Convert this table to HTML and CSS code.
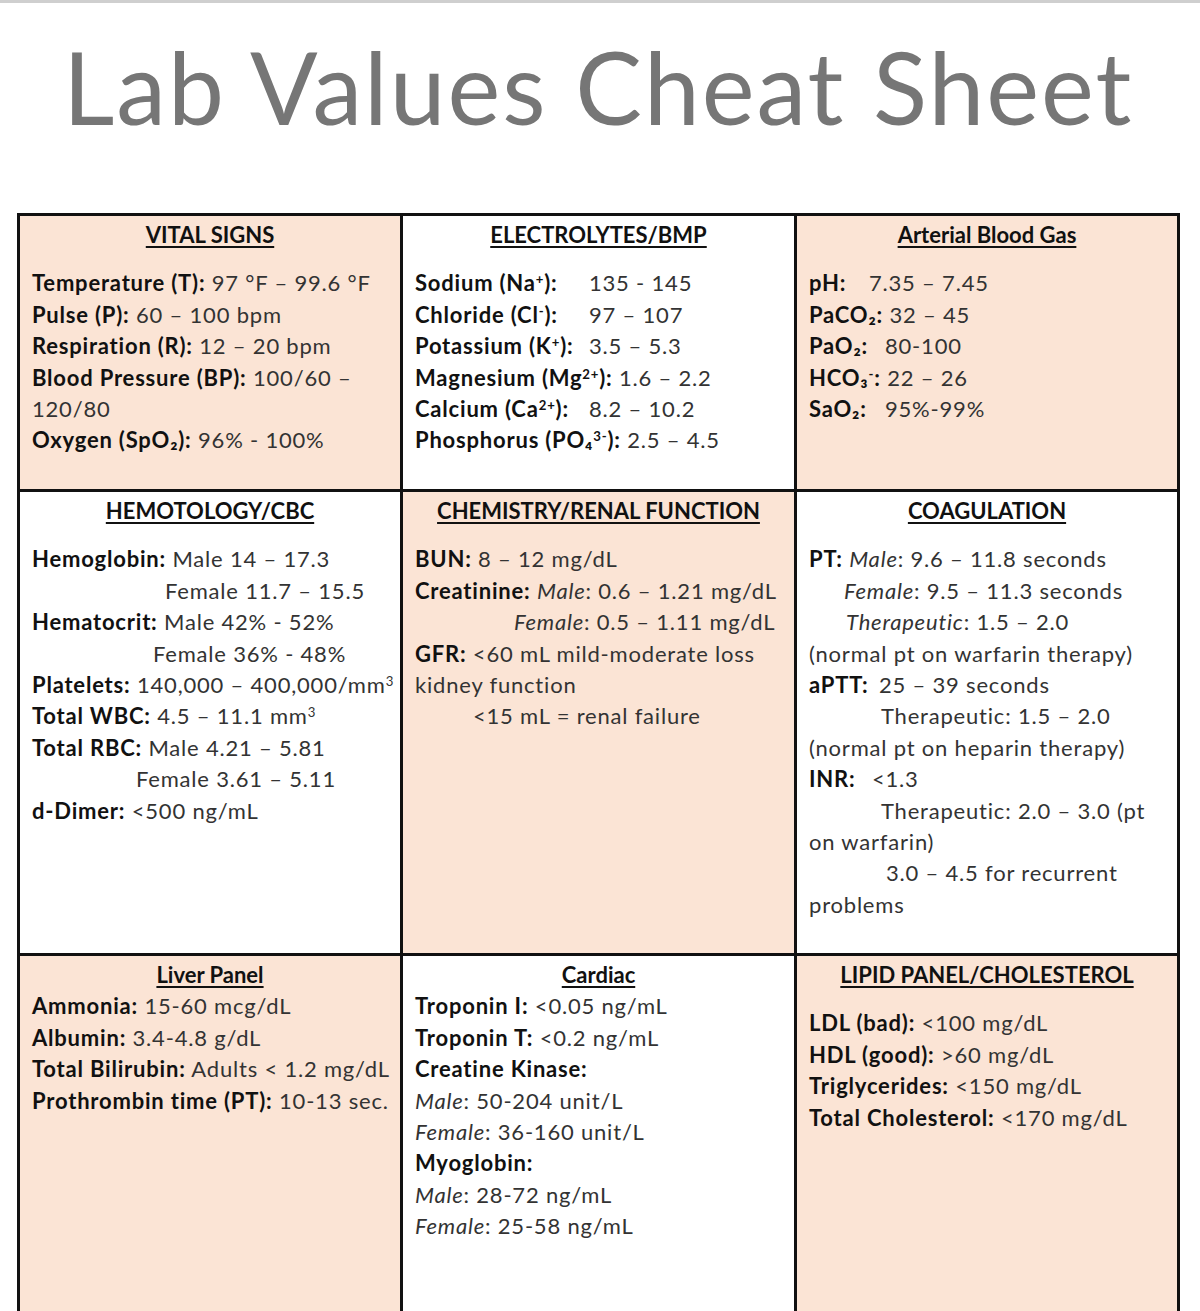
FILE: index.html
```html
<!DOCTYPE html>
<html lang="en">
<head>
<meta charset="utf-8">
<title>Lab Values Cheat Sheet</title>
<link rel="stylesheet" href="styles.css">
</head>
<body>
<div class="topline"></div>
<h1 class="title">Lab Values Cheat Sheet</h1>
<div class="sheet">
  <section class="cell peach">
    <h2 class="head gap">VITAL SIGNS</h2>
    <p><b>Temperature (T):</b> 97 °F – 99.6 °F</p>
    <p><b>Pulse (P):</b> 60 – 100 bpm</p>
    <p><b>Respiration (R):</b> 12 – 20 bpm</p>
    <p><b>Blood Pressure (BP):</b> 100/60 –<br>120/80</p>
    <p><b>Oxygen (SpO₂):</b> 96% - 100%</p>
  </section>
  <section class="cell">
    <h2 class="head gap">ELECTROLYTES/BMP</h2>
    <p><b class="lbl-e">Sodium (Na<sup>+</sup>):</b>135 - 145</p>
    <p><b class="lbl-e">Chloride (Cl<sup>-</sup>):</b>97 – 107</p>
    <p><b class="lbl-e">Potassium (K<sup>+</sup>):</b>3.5 – 5.3</p>
    <p><b>Magnesium (Mg<sup>2+</sup>):</b> 1.6 – 2.2</p>
    <p><b class="lbl-e">Calcium (Ca<sup>2+</sup>):</b>8.2 – 10.2</p>
    <p><b>Phosphorus (PO₄<sup>3-</sup>):</b> 2.5 – 4.5</p>
  </section>
  <section class="cell peach">
    <h2 class="head gap">Arterial Blood Gas</h2>
    <p><b class="lbl-ph">pH:</b>7.35 – 7.45</p>
    <p><b>PaCO₂:</b> 32 – 45</p>
    <p><b class="lbl-a">PaO₂:</b>80-100</p>
    <p><b>HCO₃<sup>-</sup>:</b> 22 – 26</p>
    <p><b class="lbl-a">SaO₂:</b>95%-99%</p>
  </section>

  <section class="cell">
    <h2 class="head gap">HEMOTOLOGY/CBC</h2>
    <p><b>Hemoglobin:</b> Male 14 – 17.3</p>
    <p class="ind-hb">Female 11.7 – 15.5</p>
    <p><b>Hematocrit:</b> Male 42% - 52%</p>
    <p class="ind-hc">Female 36% - 48%</p>
    <p class="nowrap"><b>Platelets:</b> 140,000 – 400,000/mm<sup>3</sup></p>
    <p><b>Total WBC:</b> 4.5 – 11.1 mm<sup>3</sup></p>
    <p><b>Total RBC:</b> Male 4.21 – 5.81</p>
    <p class="ind-rb">Female 3.61 – 5.11</p>
    <p><b>d-Dimer:</b> &lt;500 ng/mL</p>
  </section>
  <section class="cell peach">
    <h2 class="head gap">CHEMISTRY/RENAL FUNCTION</h2>
    <p><b>BUN:</b> 8 – 12 mg/dL</p>
    <p class="nowrap"><b>Creatinine:</b> <i>Male</i>: 0.6 – 1.21 mg/dL</p>
    <p class="ind-cr"><i>Female</i>: 0.5 – 1.11 mg/dL</p>
    <p><b>GFR:</b> &lt;60 mL mild-moderate loss<br>kidney function</p>
    <p class="ind-gfr">&lt;15 mL = renal failure</p>
  </section>
  <section class="cell">
    <h2 class="head gap">COAGULATION</h2>
    <p><b>PT:</b> <i>Male</i>: 9.6 – 11.8 seconds</p>
    <p class="ind-pt"><i>Female</i>: 9.5 – 11.3 seconds</p>
    <p class="ind-pt2"><i>Therapeutic</i>: 1.5 – 2.0</p>
    <p class="nowrap">(normal pt on warfarin therapy)</p>
    <p><b class="lbl-ap">aPTT:</b>25 – 39 seconds</p>
    <p class="ind-th">Therapeutic: 1.5 – 2.0</p>
    <p>(normal pt on heparin therapy)</p>
    <p><b class="lbl-inr">INR:</b>&lt;1.3</p>
    <p class="ind-th">Therapeutic: 2.0 – 3.0 (pt<br>on warfarin)</p>
    <p class="ind-rec">3.0 – 4.5 for recurrent<br>problems</p>
  </section>

  <section class="cell peach">
    <h2 class="head">Liver Panel</h2>
    <p><b>Ammonia:</b> 15-60 mcg/dL</p>
    <p><b>Albumin:</b> 3.4-4.8 g/dL</p>
    <p class="nowrap"><b>Total Bilirubin:</b> Adults &lt; 1.2 mg/dL</p>
    <p class="nowrap"><b>Prothrombin time (PT):</b> 10-13 sec.</p>
  </section>
  <section class="cell">
    <h2 class="head">Cardiac</h2>
    <p><b>Troponin I:</b> &lt;0.05 ng/mL</p>
    <p><b>Troponin T:</b> &lt;0.2 ng/mL</p>
    <p><b>Creatine Kinase:</b></p>
    <p><i>Male</i>: 50-204 unit/L</p>
    <p><i>Female</i>: 36-160 unit/L</p>
    <p><b>Myoglobin:</b></p>
    <p><i>Male</i>: 28-72 ng/mL</p>
    <p><i>Female</i>: 25-58 ng/mL</p>
  </section>
  <section class="cell peach">
    <h2 class="head gap">LIPID PANEL/CHOLESTEROL</h2>
    <p><b>LDL (bad):</b> &lt;100 mg/dL</p>
    <p><b>HDL (good):</b> &gt;60 mg/dL</p>
    <p><b>Triglycerides:</b> &lt;150 mg/dL</p>
    <p><b>Total Cholesterol:</b> &lt;170 mg/dL</p>
  </section>
</div>
</body>
</html>
```
FILE: styles.css
```css
html, body {
  margin: 0;
  padding: 0;
  background: #ffffff;
}
body {
  font-family: Lato, "Liberation Sans", sans-serif;
  color: #333;
  overflow: hidden;
}
.topline {
  height: 3px;
  background: #cfcfcf;
}
.title {
  margin: 18px 0 0 0;
  padding-left: 63px;
  font-family: Lato, "Open Sans", sans-serif;
  font-weight: 400;
  font-size: 100px;
  line-height: 130px;
  color: #767676;
  letter-spacing: 2px;
  height: 192px;
  white-space: nowrap;
}
.sheet {
  margin-left: 17px;
  width: 1157px;
  display: grid;
  grid-template-columns: 380px 391px 380px;
  grid-template-rows: 273px 461px 400px;
  gap: 3px;
  background: #111;
  border: 3px solid #111;
}
.cell {
  background: #ffffff;
  padding: 3px 0 0 12px;
  font-size: 22px;
  line-height: 31.4px;
  letter-spacing: 0.8px;
  overflow: hidden;
}
.cell.peach {
  background: #fbe4d5;
}
.head {
  margin: 0 0 0 -12px;
  font-size: 22px;
  font-weight: 700;
  text-align: center;
  line-height: 31.4px;
  letter-spacing: 0;
  text-decoration: underline;
  text-decoration-thickness: 2px;
  text-underline-offset: 3px;
  color: #111;
}
.head.gap {
  margin-bottom: 17px;
}
.cell p {
  margin: 0;
}
.cell .nowrap {
  white-space: nowrap;
}
.cell b {
  font-weight: 700;
  color: #111;
}
.cell i {
  font-style: italic;
}
sup {
  font-size: 0.6em;
  line-height: 0;
  vertical-align: 0.55em;
}
.lbl-e {
  display: inline-block;
  min-width: 174px;
}
.lbl-ph {
  display: inline-block;
  min-width: 60px;
}
.lbl-a {
  display: inline-block;
  min-width: 76px;
}
.lbl-ap {
  display: inline-block;
  min-width: 70px;
}
.lbl-inr {
  display: inline-block;
  min-width: 63px;
}
.ind-hb { padding-left: 133px; }
.ind-hc { padding-left: 121px; }
.ind-rb { padding-left: 104px; }
.ind-cr { padding-left: 99px; }
.ind-gfr { padding-left: 58px; }
.ind-pt { padding-left: 35px; }
.ind-pt2 { padding-left: 37px; }
.ind-th { text-indent: 72px; }
.ind-rec { text-indent: 77px; }
```
